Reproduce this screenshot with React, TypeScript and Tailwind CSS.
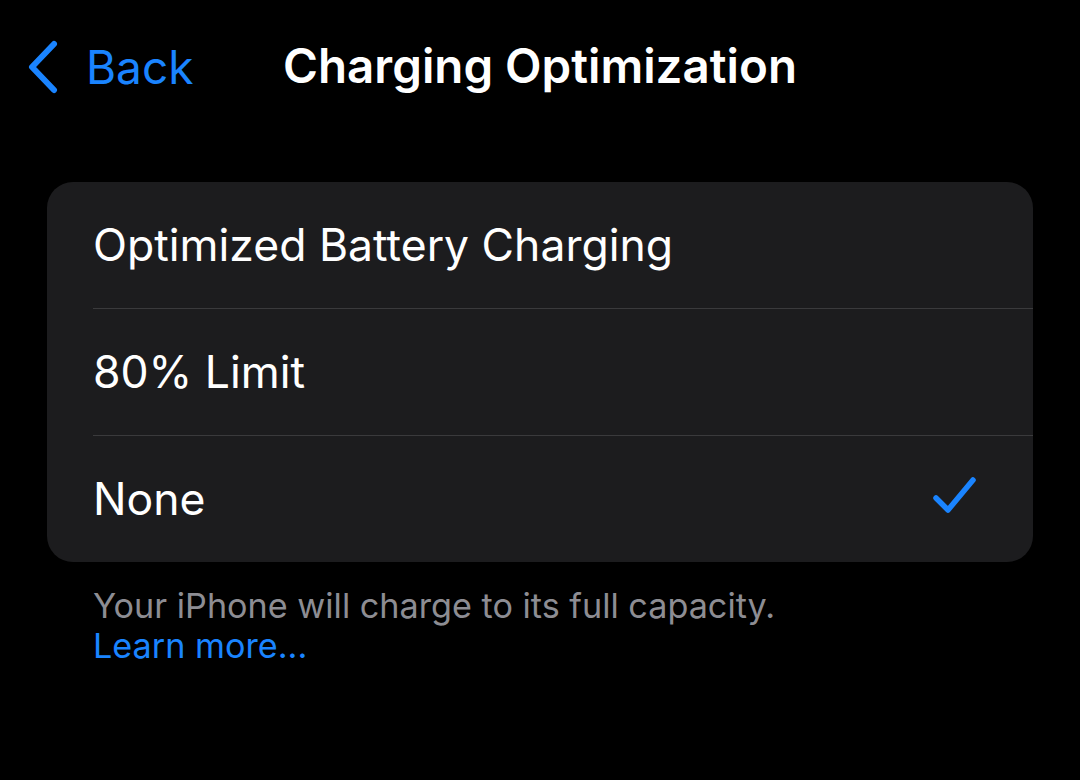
import React from "react"

const options = ["Optimized Battery Charging", "80% Limit", "None"]

function Chevron() {
  return (
    <svg width="34" height="54" viewBox="0 0 34 54" fill="none" className="shrink-0">
      <path
        d="M28 4 L6 27 L28 50"
        stroke="#1a84ff"
        strokeWidth="6"
        strokeLinecap="round"
        strokeLinejoin="round"
      />
    </svg>
  )
}

function Check() {
  return (
    <svg width="44" height="44" viewBox="0 0 44 44" fill="none">
      <path
        d="M3 21 L15 33 L40 3"
        stroke="#1a84ff"
        strokeWidth="5.5"
        strokeLinecap="round"
        strokeLinejoin="round"
      />
    </svg>
  )
}

export default function App() {
  const selected = "None"

  return (
    <div
      className="flex h-[780px] w-[1080px] flex-col bg-black text-white"
      style={{ fontFamily: "Inter, 'Noto Sans', sans-serif" }}
    >
      <div className="relative flex h-[136px] items-center">
        <button className="absolute left-[26px] top-[40px] flex items-center gap-[26px] text-[#1a84ff]">
          <Chevron />
          <span className="text-[46px] leading-none">Back</span>
        </button>
        <h1 className="mx-auto -mt-[4px] text-[47.5px] font-semibold leading-none">
          Charging Optimization
        </h1>
      </div>

      <div className="mx-[47px] mt-[46px] overflow-hidden rounded-[26px] bg-[#1c1c1e]">
        {options.map((label, i) => (
          <div key={label} className="pl-[93px] -ml-[47px]">
            {i > 0 ? <div className="h-px bg-[#3a3a3c]" /> : null}
            <div className="flex h-[126px] items-center justify-between pr-[56px]">
              <span className="text-[44.5px] leading-none">{label}</span>
              {label === selected ? <Check /> : null}
            </div>
          </div>
        ))}
      </div>

      <div className="mt-[24px] px-[93px] text-[34.2px] leading-[40px]">
        <p className="text-[#8d8d93]">Your iPhone will charge to its full capacity.</p>
        <p className="text-[#1a84ff]">Learn more...</p>
      </div>
    </div>
  )
}
